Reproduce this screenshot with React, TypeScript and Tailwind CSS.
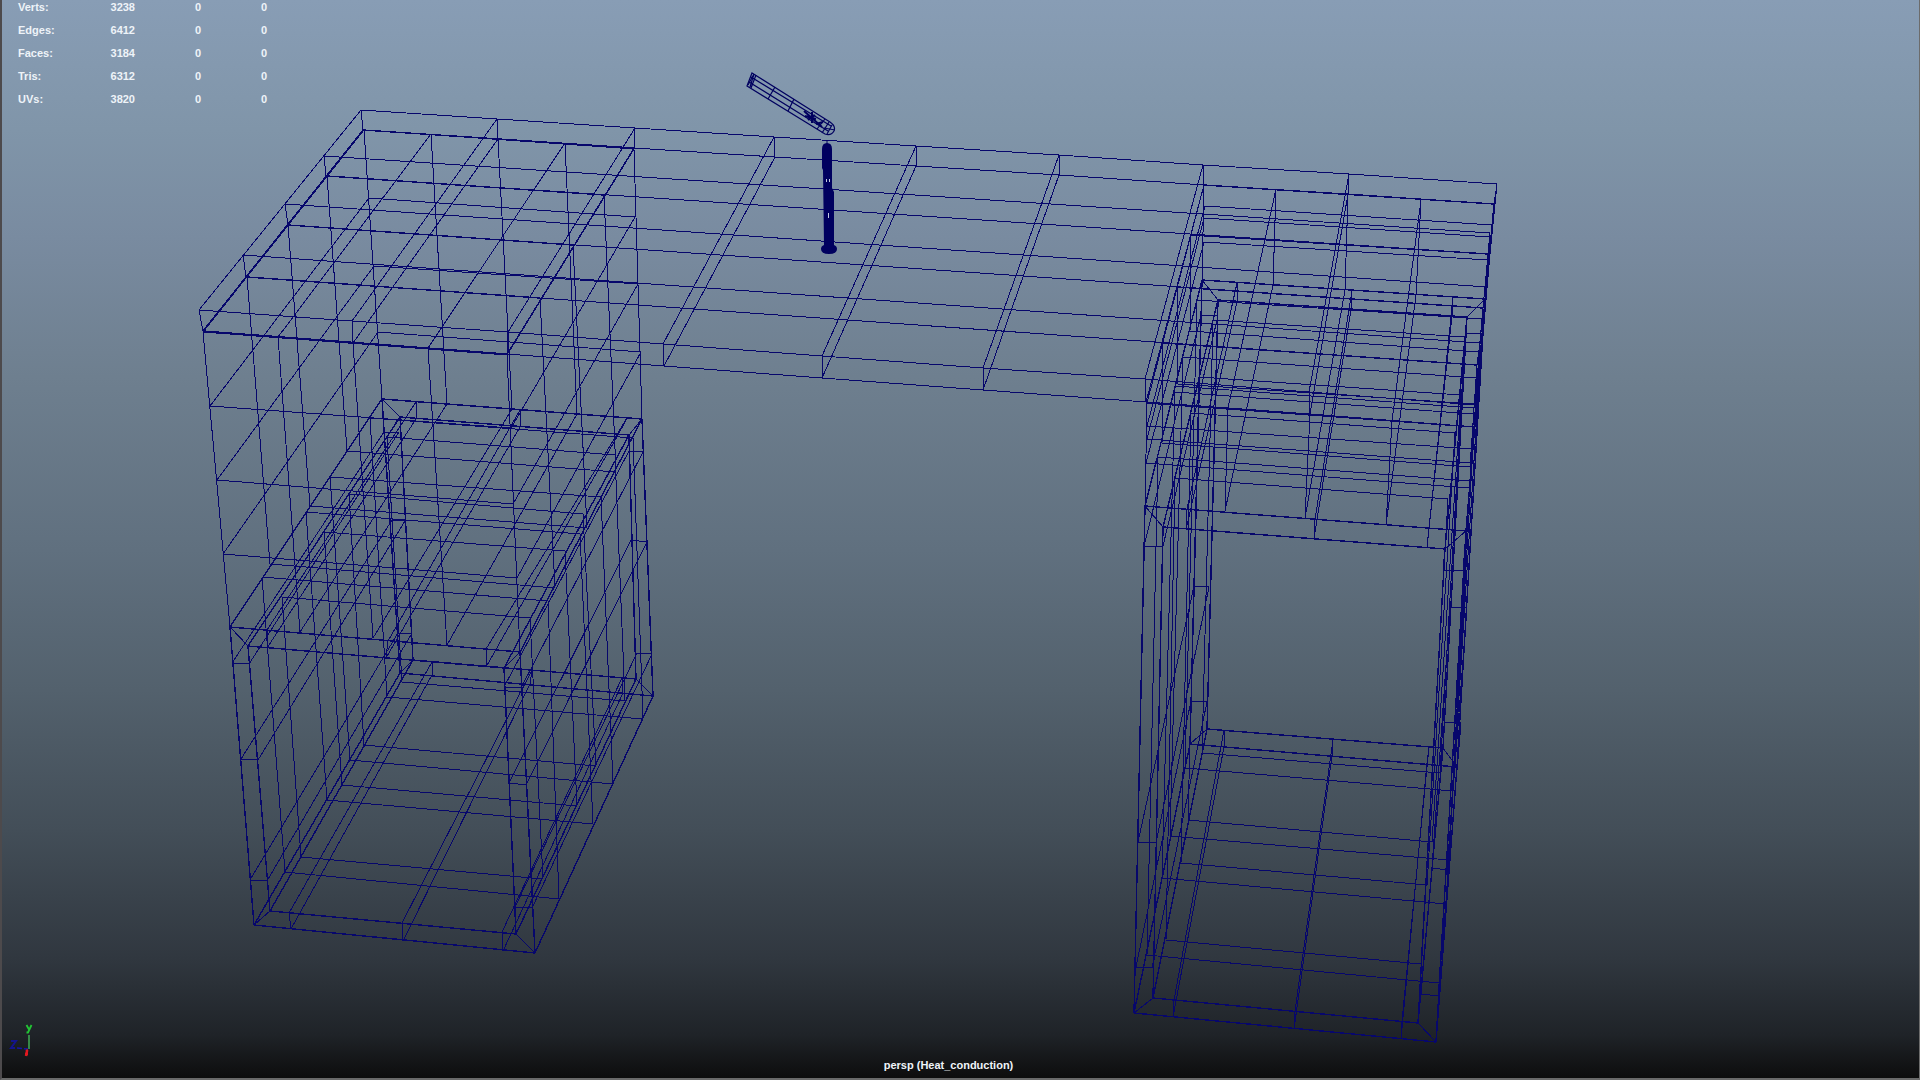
type Point = [number, number]
type Segment = [Point, Point]
type Quad = [Point, Point, Point, Point]

const STATS = [
  { label: 'Verts:', total: 3238 },
  { label: 'Edges:', total: 6412 },
  { label: 'Faces:', total: 3184 },
  { label: 'Tris:', total: 6312 },
  { label: 'UVs:', total: 3820 },
]

// joins two rows of points one to one
function link(a: Point[], b: Point[]): Segment[] {
  return a.map((p, i) => [p, b[i]])
}

function chain(points: Point[]): Segment[] {
  return points.slice(1).map((p, i) => [points[i], p])
}

function loop(q: Quad): Segment[] {
  return chain([...q, q[0]])
}

function toPath(segments: Segment[]) {
  return segments.map(([a, b]) => `M${a[0]} ${a[1]}L${b[0]} ${b[1]}`).join('')
}

// ---- table top ----
const top = {
  backUpper: [[361, 110], [497, 119], [635, 128], [774, 137], [916, 146], [1059, 155], [1203, 165], [1349, 174], [1497, 184]] as Point[],
  backLower: [[363, 130], [498, 139], [634, 148], [775, 157], [916, 166], [1059, 175], [1204, 185], [1348, 194], [1494, 204]] as Point[],
  frontUpper: [[199, 310], [352, 321], [508, 332], [663, 344], [822, 356], [983, 368], [1145, 379], [1309, 392], [1475, 405]] as Point[],
  frontLower: [[203, 331], [353, 343], [507, 354], [664, 366], [822, 378], [983, 390], [1146, 402], [1310, 414], [1475, 427]] as Point[],
  leftUpper: [[324, 156], [285, 204], [243, 255]] as Point[],
  rightUpper: [[1490, 233], [1487, 287], [1480, 343]] as Point[],
  leftLower: [[326, 176], [288, 225], [246, 277]] as Point[],
  rightLower: [[1488, 254], [1484, 308], [1477, 365]] as Point[],
}

const topLines: Segment[] = [
  ...chain(top.backUpper),
  ...chain(top.backLower),
  ...chain(top.frontUpper),
  ...chain(top.frontLower),
  ...link(top.backUpper, top.frontUpper),
  ...link(top.backLower, top.frontLower),
  ...link(top.backUpper, top.backLower),
  ...link(top.frontUpper, top.frontLower),
  ...link(top.leftUpper, top.rightUpper),
  ...link(top.leftLower, top.rightLower),
  ...link(top.leftUpper, top.leftLower),
  ...link(top.rightUpper, top.rightLower),
]

// ---- drawer bodies, corner order: top left, top right, bottom right, bottom left ----
type Body = {
  front: Quad
  back: Quad
  frontTop: Point[]
  frontBottom: Point[]
  backTop: Point[]
  backBottom: Point[]
  frontLeft: Point[]
  frontRight: Point[]
  backLeft: Point[]
  backRight: Point[]
  leftTop: Point[]
  leftBottom: Point[]
  rightTop: Point[]
  rightBottom: Point[]
}

const leftBody: Body = {
  front: [[203, 332], [507, 355], [520, 652], [230, 627]],
  back: [[364, 130], [634, 149], [642, 419], [382, 399]],
  frontTop: [[278, 337], [353, 343], [428, 348]],
  frontBottom: [[300, 632], [373, 638], [447, 645]],
  backTop: [[431, 134], [498, 139], [565, 143]],
  backBottom: [[447, 404], [512, 409], [577, 414]],
  frontLeft: [[210, 406], [217, 480], [223, 554]],
  frontRight: [[511, 428], [513, 504], [517, 578]],
  backLeft: [[369, 198], [374, 266], [378, 332]],
  backRight: [[635, 217], [638, 284], [641, 352]],
  leftTop: [[327, 176], [288, 225], [247, 277]],
  leftBottom: [[347, 451], [310, 506], [270, 564]],
  rightTop: [[604, 195], [573, 245], [540, 298]],
  rightBottom: [[616, 472], [587, 528], [555, 588]],
}

const rightBody: Body = {
  front: [[1147, 403], [1475, 427], [1466, 531], [1145, 506]],
  back: [[1204, 185], [1494, 204], [1485, 299], [1202, 280]],
  frontTop: [[1228, 408], [1310, 414], [1392, 421]],
  frontBottom: [[1225, 511], [1305, 518], [1386, 525]],
  backTop: [[1276, 189], [1348, 194], [1421, 200]],
  backBottom: [[1273, 285], [1345, 290], [1416, 295]],
  frontLeft: [[1147, 426], [1147, 439], [1146, 463]],
  frontRight: [[1472, 449], [1472, 463], [1470, 488]],
  backLeft: [[1205, 206], [1204, 218], [1204, 242]],
  backRight: [[1492, 225], [1490, 237], [1488, 260]],
  leftTop: [[1191, 235], [1177, 287], [1163, 343]],
  leftBottom: [[1190, 331], [1178, 384], [1162, 443]],
  rightTop: [[1488, 254], [1483, 308], [1477, 365]],
  rightBottom: [[1479, 352], [1475, 404], [1470, 467]],
}

function bodyLines(b: Body): Segment[] {
  return [
    ...loop(b.front),
    ...loop(b.back),
    ...link(b.front, b.back),
    ...link(b.frontTop, b.frontBottom),
    ...link(b.backTop, b.backBottom),
    ...link(b.frontTop, b.backTop),
    ...link(b.frontBottom, b.backBottom),
    ...link(b.frontLeft, b.frontRight),
    ...link(b.backLeft, b.backRight),
    ...link(b.frontLeft, b.backLeft),
    ...link(b.frontRight, b.backRight),
    ...link(b.leftTop, b.leftBottom),
    ...link(b.rightTop, b.rightBottom),
    ...link(b.leftTop, b.rightTop),
    ...link(b.leftBottom, b.rightBottom),
  ]
}

// ---- open frames under the bodies ----
// every shell has four corners per ring, cuts along each side and rails along each edge
type Shell = {
  front: Quad
  back: Quad
  rails: Quad[]
  frontCuts: Point[]
  backCuts: Point[]
}

type Frame = { outer: Shell; inner: Shell }

const leftFrame: Frame = {
  outer: {
    front: [[230, 627], [520, 652], [535, 953], [254, 925]],
    back: [[382, 399], [642, 419], [653, 696], [400, 673]],
    rails: [
      [[370, 418], [633, 438], [643, 719], [387, 697]],
      [[330, 477], [601, 497], [613, 784], [350, 760]],
      [[306, 512], [580, 534], [593, 824], [327, 800]],
      [[262, 577], [548, 601], [559, 899], [285, 872]],
    ],
    frontCuts: [
      [267, 630], [388, 641], [486, 649],
      [521, 688], [526, 785], [532, 908],
      [503, 951], [403, 941], [291, 929],
      [250, 880], [241, 759], [232, 663],
    ],
    backCuts: [
      [416, 402], [520, 410], [627, 418],
      [643, 452], [647, 542], [652, 654],
      [623, 693], [530, 684], [432, 675],
      [398, 633], [392, 520], [384, 432],
    ],
  },
  inner: {
    front: [[248, 646], [504, 668], [516, 934], [270, 911]],
    back: [[400, 417], [629, 435], [636, 679], [413, 660]],
    rails: [
      [[387, 437], [615, 455], [625, 701], [402, 682]],
      [[349, 494], [583, 514], [596, 766], [364, 745]],
      [[324, 532], [565, 551], [577, 806], [342, 785]],
      [[282, 597], [530, 618], [543, 879], [301, 857]],
    ],
    frontCuts: [
      [267, 648], [386, 658], [486, 667],
      [504, 687], [509, 783], [515, 907],
      [502, 932], [402, 923], [289, 913],
      [267, 881], [258, 760], [249, 664],
    ],
    backCuts: [
      [416, 419], [520, 427], [618, 435],
      [629, 451], [631, 540], [637, 653],
      [622, 678], [532, 670], [432, 662],
      [412, 633], [405, 521], [399, 432],
    ],
  },
}

const rightFrame: Frame = {
  outer: {
    front: [[1145, 506], [1466, 531], [1436, 1042], [1134, 1013]],
    back: [[1202, 280], [1485, 299], [1457, 767], [1190, 744]],
    rails: [
      [[1197, 300], [1483, 319], [1453, 791], [1185, 768]],
      [[1183, 357], [1477, 378], [1449, 860], [1170, 836]],
      [[1175, 386], [1474, 408], [1446, 904], [1162, 878]],
      [[1158, 457], [1470, 481], [1439, 983], [1147, 955]],
    ],
    frontCuts: [
      [1187, 509], [1315, 519], [1429, 528],
      [1463, 571], [1447, 870], [1438, 996],
      [1401, 1039], [1294, 1029], [1173, 1017],
      [1136, 967], [1138, 842], [1144, 546],
    ],
    backCuts: [
      [1237, 283], [1352, 291], [1453, 298],
      [1482, 334], [1467, 608], [1461, 723],
      [1427, 763], [1332, 756], [1224, 747],
      [1191, 701], [1194, 586], [1201, 315],
    ],
  },
  inner: {
    front: [[1163, 527], [1445, 549], [1418, 1023], [1153, 998]],
    back: [[1218, 300], [1467, 317], [1443, 748], [1207, 729]],
    rails: [
      [[1213, 320], [1465, 337], [1440, 773], [1202, 753]],
      [[1199, 377], [1461, 395], [1432, 842], [1188, 820]],
      [[1191, 413], [1455, 433], [1427, 885], [1181, 863]],
      [[1175, 478], [1448, 499], [1421, 964], [1166, 940]],
    ],
    frontCuts: [
      [1186, 530], [1314, 538], [1427, 547],
      [1443, 570], [1432, 868], [1421, 994],
      [1402, 1021], [1295, 1011], [1174, 1000],
      [1152, 968], [1156, 843], [1163, 546],
    ],
    backCuts: [
      [1237, 302], [1351, 310], [1452, 316],
      [1466, 333], [1450, 607], [1445, 722],
      [1429, 747], [1333, 740], [1224, 730],
      [1207, 702], [1209, 587], [1218, 316],
    ],
  },
}

function frameLines({ outer, inner }: Frame): Segment[] {
  return [
    ...[outer, inner].flatMap(s => [
      ...link(s.frontCuts, s.backCuts),
      ...s.rails.flatMap(loop),
    ]),
    ...link(outer.front, inner.front),
    ...link(outer.back, inner.back),
    ...link(outer.frontCuts, inner.frontCuts),
    ...link(outer.backCuts, inner.backCuts),
  ]
}

function frameEdges({ outer, inner }: Frame): Segment[] {
  return [outer, inner].flatMap(s => [...loop(s.front), ...loop(s.back), ...link(s.front, s.back)])
}

const thinLines = toPath([
  ...topLines,
  ...bodyLines(leftBody),
  ...bodyLines(rightBody),
  ...frameLines(leftFrame),
  ...frameLines(rightFrame),
  [[1175, 392], [1473, 414]],
])

const heavyLines = toPath([
  ...frameEdges(leftFrame),
  ...frameEdges(rightFrame),
  [[363, 130], [634, 148]],
  [[203, 331], [507, 354]],
  [[363, 130], [203, 331]],
  ...link(leftBody.leftTop, leftBody.rightTop),
  [[1204, 185], [1494, 204]],
  [[1147, 403], [1475, 427]],
  [[1494, 204], [1475, 427]],
  ...link(rightBody.leftTop, rightBody.rightTop),
])

function Lamp() {
  return (
    <g stroke="#00005f" fill="none">
      {/* arm */}
      <g strokeWidth="1.2">
        <path d="M752 73L830 122Q836 126 834 131Q831 136 825 134L747 86Z" />
        <path d="M751 77L831 126M749 82L828 131M756 75L751 88M754 74L750 87" />
        <path d="M775 87L768 99M794 99L788 111M825 119L817 129M829 122L822 133M832 125L827 134" />
        <path d="M824 128L835 130M748 85L754 74" />
      </g>
      <path strokeWidth="2" d="M804 111L822 127M805 116L816 119M808 120L815 115M812 112L812 123M816 124L823 122" />
      {/* post */}
      <path fill="#00005f" stroke="none" d="M822 149Q822 143 827 143Q832 143 832 149V188L834 192V245Q837 246 837 249Q837 254 829 254Q821 254 821 249Q821 246 824 245L823 170L822 168Z" />
      <path d="M827 140V144" />
      <path stroke="#c3cbe0" strokeWidth="1" d="M826.5 179V182M829.5 179V182M828.5 213V218" />
    </g>
  )
}

function AxisGizmo() {
  return (
    <svg viewBox="0 0 32 40" className="absolute bottom-3.5 left-1.5 h-10 w-8" aria-label="Axis orientation">
      <path d="M21 11V25" stroke="#3fae55" strokeWidth="1.5" />
      <path d="M9 24L20 25" stroke="#1616a8" strokeWidth="1.5" strokeDasharray="5 2" />
      <path d="M3 17H8L3 24H7" stroke="#14148c" strokeWidth="2" fill="none" />
      <path d="M18 27L20 26M17 30H20M19 27L18 32" stroke="#e0181f" strokeWidth="2.5" />
      <path d="M18.500 1L21 5.500M23.500 1L20 8.500H18.500" stroke="#22c534" strokeWidth="1.800" fill="none" />
    </svg>
  )
}

export default function App() {
  return (
    <main className="relative h-screen w-full overflow-hidden border-r border-b-2 border-l-2 border-r-[#6c6c6c] border-b-[#6a6a6a] border-l-[#4d4a4c] bg-[linear-gradient(to_bottom,#889db5_0%,#8095a9_12%,#798ba0_22%,#6e7f8f_35%,#60707f_51%,#53616d_64%,#434e58_77%,#30373f_89%,#1f2328_96%,#0d0d0d_100%)] font-['Liberation_Sans',Arial,sans-serif] text-[11px] font-bold text-[#eef3f8]">
      <svg
        viewBox="2 0 1917 1078"
        preserveAspectRatio="xMidYMid meet"
        className="block h-full w-full"
        role="img"
        aria-label="Desk wireframe"
      >
        <g fill="none" stroke="#07076c" shapeRendering="crispEdges">
          <path d={thinLines} strokeWidth="1" />
          <path d={heavyLines} strokeWidth="1.4" />
        </g>
        <Lamp />
      </svg>

      {/* poly count */}
      <table className="absolute top-0 left-4 border-collapse leading-[14px]">
        <tbody>
          {STATS.map(row => (
            <tr key={row.label} className="h-[23px] align-top">
              <th scope="row" className="w-16 p-0 text-left">{row.label}</th>
              <td className="w-[53px] p-0 text-right">{row.total}</td>
              <td className="w-[66px] p-0 text-right">0</td>
              <td className="w-[66px] p-0 text-right">0</td>
            </tr>
          ))}
        </tbody>
      </table>

      <AxisGizmo />
      <p className="absolute inset-x-0 bottom-[5px] pr-6 text-center leading-4">persp (Heat_conduction)</p>
    </main>
  )
}
